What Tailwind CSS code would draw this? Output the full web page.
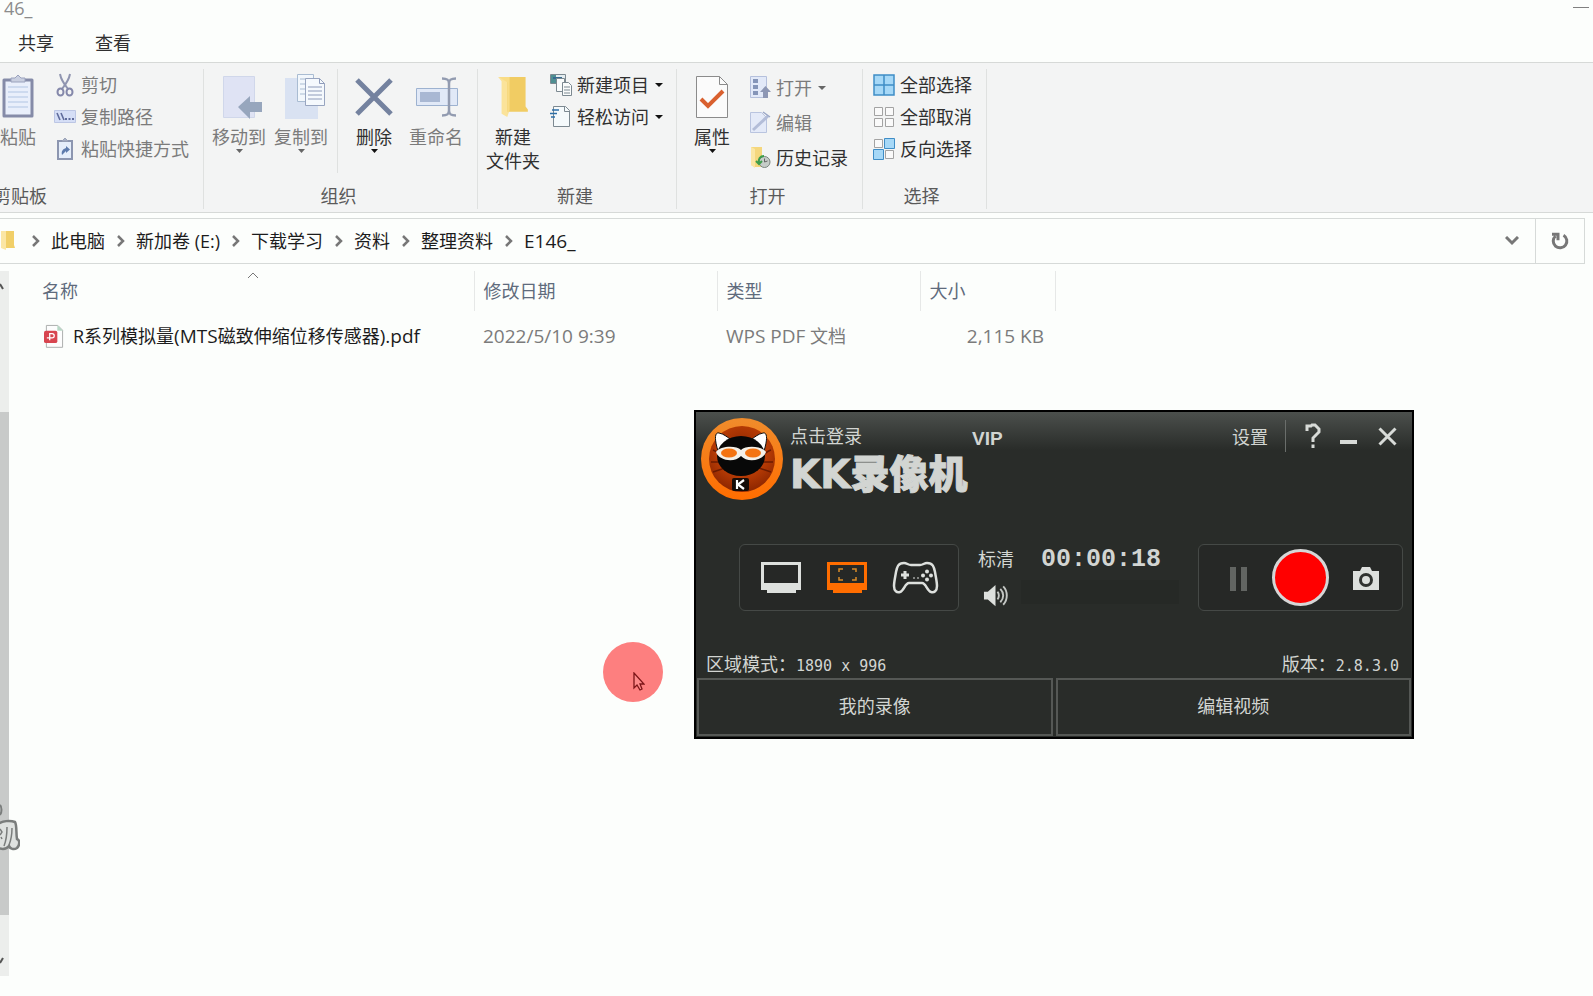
<!DOCTYPE html>
<html lang="zh-CN">
<head>
    <meta charset="UTF-8">
    <meta name="viewport" content="width=device-width, initial-scale=1">
    <title>E146_</title>
    <script src="https://cdn.jsdelivr.net/npm/@tailwindcss/browser@4"></script>
</head>
<body class="relative flex h-screen flex-col overflow-hidden bg-[#fcfefc] font-['Open_Sans','Noto_Sans_CJK_SC',sans-serif] text-[18px] leading-6 text-[#303030]">

    <!-- title bar -->
    <header class="flex h-6 items-start justify-between pl-1 text-[#8c8c8c]">
        <span class="-mt-1">46_</span>
        <button aria-label="最小化" class="mt-[7px] mr-1 h-px w-4 bg-[#808080]"></button>
    </header>

    <nav class="flex h-[38px] items-center gap-[41px] pl-[18px]">
        <button>共享</button>
        <button>查看</button>
    </nav>

    <!-- ribbon -->
    <section class="flex h-[151px] shrink-0 border-y border-[#d6d9d7] bg-[#f3f4f4] pt-1.5 pb-[3px] whitespace-nowrap">

        <div class="flex w-[204px] flex-col border-r border-[#dfe1e0] text-[#7b7b7b]">
            <div class="flex h-[115px] items-start">
                <button class="flex w-9 flex-col items-center">
                    <span class="flex h-14 items-center">
                        <svg class="w-8" viewBox="0 0 32 46">
                            <path d="M2 6h28v36H2z" fill="#e9effb" stroke="#858ba8" stroke-width="3" stroke-linejoin="round"/>
                            <path d="M9 8V4h4l3-3 3 3h4v4z" fill="#c9cfe0" stroke="#9aa2bd"/>
                            <path d="M6 13h20M6 18h20M6 23h20M6 28h20M6 33h20" stroke="#c3d3ec" stroke-width="1.5"/>
                        </svg>
                    </span>
                    粘贴
                </button>
                <div class="ml-[18px]">
                    <button class="flex h-8 items-center gap-[5px]">
                        <svg class="w-[22px]" viewBox="0 0 22 24" fill="none" stroke="#9095b0" stroke-width="2">
                            <path d="M6 1c1 6 4 10 8 15M16 1c-1 6-4 10-8 15"/>
                            <ellipse cx="6.500" cy="19" rx="3" ry="3.500" stroke="#8488aa"/>
                            <ellipse cx="15.500" cy="19" rx="3" ry="3.500" stroke="#8488aa"/>
                        </svg>
                        剪切
                    </button>
                    <button class="flex h-8 items-center gap-[5px]">
                        <svg class="w-[22px]" viewBox="0 0 22 14">
                            <path d="M.5.5h21v12H.5z" fill="#d5def6" stroke="#bcc6e4"/>
                            <path d="M3 3l3 7M7 3l3 7" stroke="#5f6b9b" stroke-width="1.600"/>
                            <path d="M11 9h2M14.500 9h2M18 9h2" stroke="#5f6b9b" stroke-width="2"/>
                        </svg>
                        复制路径
                    </button>
                    <button class="flex h-8 items-center gap-[5px]">
                        <svg class="w-[22px]" viewBox="0 0 22 24" fill="none">
                            <path d="M4 4h14v18H4z" fill="#e5eefb" stroke="#8c96b0" stroke-width="2"/>
                            <path d="M8 4l3-3 3 3z" fill="#aab2c6" stroke="#9aa3b8"/>
                            <path d="M8 18c-1-4 1-6 4-7v-2l4 3.500-4 3.500v-2z" fill="#5d7bad"/>
                        </svg>
                        粘贴快捷方式
                    </button>
                </div>
            </div>
            <p class="-ml-[7px] text-[#5a5a5a]">剪贴板</p>
        </div>

        <div class="flex w-[274px] flex-col border-r border-[#dfe1e0] pl-1">
            <div class="flex h-[115px] items-start text-[#7b7b7b]">
                <button class="flex w-[62px] flex-col items-center">
                    <span class="flex h-14 items-center pl-1.5">
                        <svg class="w-[42px]" viewBox="0 0 42 46">
                            <path d="M2.500 2.500h31v41h-31z" fill="#dfe3f4" stroke="#d0d7ea"/>
                            <path d="M17 33l12-11v6h12v10H29v7z" fill="#97a6bd"/>
                        </svg>
                    </span>
                    移动到
                    <svg class="w-[7px]" viewBox="0 0 7 4"><path d="M0 0h7L3.500 4z" fill="#666"/></svg>
                </button>
                <button class="flex w-[62px] flex-col items-center">
                    <span class="flex h-14 items-center pl-2">
                        <svg class="w-[42px]" viewBox="0 0 42 48">
                            <path d="M1 5h33v41H1z" fill="#d9e2f2"/>
                            <path d="M13.500 1.500h16v27h-16z" fill="#f2f7fc" stroke="#a9bcd2"/>
                            <path d="M16 6h11M16 11h11M16 16h11M16 21h11" stroke="#a9bcd2"/>
                            <path d="M21.500 5.500h14l5 5v22h-19z" fill="#f5f9fd" stroke="#98a5c0"/>
                            <path d="M35.500 5.500v5h5M24 14h14M24 18h14M24 22h14M24 26h14" fill="none" stroke="#8e9bba"/>
                        </svg>
                    </span>
                    复制到
                    <svg class="w-[7px]" viewBox="0 0 7 4"><path d="M0 0h7L3.500 4z" fill="#666"/></svg>
                </button>
                <span class="mx-[5px] h-[104px] w-px bg-[#dfe1e0]"></span>
                <button class="flex w-[62px] flex-col items-center text-[#303030]">
                    <span class="flex h-14 items-center">
                        <svg class="w-[38px]" viewBox="0 0 38 38"><path d="M2 2l34 34M36 2L2 36" stroke="#74829f" stroke-width="5"/></svg>
                    </span>
                    删除
                    <svg class="w-[7px]" viewBox="0 0 7 4"><path d="M0 0h7L3.500 4z" fill="#111"/></svg>
                </button>
                <button class="flex w-[62px] flex-col items-center">
                    <span class="flex h-14 items-center pl-0.5">
                        <svg class="w-[44px]" viewBox="0 0 44 40" fill="none">
                            <path d="M1.500 11.500h41v17h-41z" fill="#e1e9f7" stroke="#9db2d0"/>
                            <path d="M5 15h20v10H5z" fill="#a9b8d3"/>
                            <path d="M27 1.500c5 0 7 1 7 5v27c0 4-2 5-7 5M41 1.500c-5 0-7 1-7 5v27c0 4 2 5 7 5" stroke="#929bb0" stroke-width="2.500"/>
                        </svg>
                    </span>
                    重命名
                </button>
            </div>
            <p class="-ml-2 text-center text-[#5a5a5a]">组织</p>
        </div>

        <div class="flex w-[199px] flex-col border-r border-[#dfe1e0] pl-1">
            <div class="flex h-[115px] items-start">
                <button class="flex w-[62px] flex-col items-center">
                    <span class="flex h-14 items-center">
                        <svg class="w-8" viewBox="0 0 28 40" preserveAspectRatio="none" height="42">
                            <path d="M8 1h17v28l2 3v2H8z" fill="#f1cc63"/>
                            <path d="M1 1l8 4v34l-5-3V5z" fill="#fbe39a"/>
                            <path d="M1 1h10v31l-2 7V6z" fill="#f9dc85"/>
                        </svg>
                    </span>
                    新建<br>文件夹
                </button>
                <div class="ml-1.5">
                    <button class="flex h-8 items-center gap-[5px]">
                        <svg class="w-[22px]" viewBox="0 0 22 22" fill="none" stroke="#7c8991">
                            <path d="M.5.5h15v9H.5z" fill="#e4edf0"/>
                            <path d="M1 1h5v8H1z" fill="#4f8f92" stroke="none"/><path d="M3 4h9" stroke="#376a91" stroke-width="2"/>
                            <path d="M6.500 4.500h8v13h-8z" fill="#fafcfc"/>
                            <path d="M12.500 8.500h6l3 3v10h-9z" fill="#fafcfc"/>
                            <path d="M14 13h6M14 16h6M14 19h6"/>
                        </svg>
                        新建项目
                        <svg class="ml-px w-2" viewBox="0 0 8 4"><path d="M0 0h8L4 4z" fill="#111"/></svg>
                    </button>
                    <button class="flex h-8 items-center gap-[5px]">
                        <svg class="w-[22px]" viewBox="0 0 22 24" fill="none">
                            <path d="M3.500 1.500h12l4 4v16h-16z" fill="#f5fafc" stroke="#7c8991"/>
                            <path d="M14.500 1.500v5h5" stroke="#7c8991"/>
                            <path d="M2 5h7M0 8.500h7M1 12h4" stroke="#2c6fa8" stroke-width="1.500"/>
                        </svg>
                        轻松访问
                        <svg class="ml-px w-2" viewBox="0 0 8 4"><path d="M0 0h8L4 4z" fill="#111"/></svg>
                    </button>
                </div>
            </div>
            <p class="-ml-2 text-center text-[#5a5a5a]">新建</p>
        </div>

        <div class="flex w-[186px] flex-col border-r border-[#dfe1e0] pl-1">
            <div class="flex h-[115px] items-start">
                <button class="flex w-[62px] flex-col items-center">
                    <span class="flex h-14 items-center">
                        <svg class="w-[34px]" viewBox="0 0 34 44" fill="none">
                            <path d="M1.500 1.500h23l8 8v33h-31z" fill="#fbfbfb" stroke="#8b8b8b"/>
                            <path d="M24.500 1.500v8h8" stroke="#8b8b8b"/>
                            <path d="M6 24l7 7 15-15" stroke="#d9602f" stroke-width="4"/>
                        </svg>
                    </span>
                    属性
                    <svg class="w-[7px]" viewBox="0 0 7 4"><path d="M0 0h7L3.500 4z" fill="#111"/></svg>
                </button>
                <div class="ml-[7px] pt-px">
                    <button class="flex h-[35px] items-center gap-[5px] text-[#7b7b7b]">
                        <svg class="w-[21px]" viewBox="0 0 21 23">
                            <path d="M.5.500h16v21H.5z" fill="#e2e9f8" stroke="#b5c0dc"/>
                            <path d="M3 3h5v4H3zM3 9h5v4H3zM3 15h5v4H3z" fill="#8595b8"/>
                            <path d="M10 16l5.500-6 5.500 6h-3v6h-5v-6z" fill="#8d97b4"/>
                        </svg>
                        打开
                        <svg class="ml-px w-2" viewBox="0 0 8 4"><path d="M0 0h8L4 4z" fill="#666"/></svg>
                    </button>
                    <button class="flex h-[35px] items-center gap-[5px] text-[#7b7b7b]">
                        <svg class="w-[21px]" viewBox="0 0 21 23" fill="none">
                            <path d="M.5 1.500h11l5 5v15H.5z" fill="#e4eaf8" stroke="#b9c4df"/>
                            <path d="M3 19L18 5" stroke="#b3bdd8" stroke-width="3"/>
                            <path d="M13 1l7 5" stroke="#9aa6c6" stroke-width="1.500"/>
                        </svg>
                        编辑
                    </button>
                    <button class="flex h-[35px] items-center gap-[5px]">
                        <svg class="w-[21px]" viewBox="0 0 21 23" fill="none">
                            <path d="M1 1h11v20H5l-4-2z" fill="#f5d77d"/><path d="M1 1l4 2v19l-4-3z" fill="#fbe6a4"/>
                            <circle cx="14.500" cy="16" r="5.500" fill="#c5ccc8" stroke="#7b8580"/>
                            <path d="M14.500 12.500V16l3-1" stroke="#666"/>
                            <path d="M14 10c-4 0-6 3-5 7M6 15l3 3 3-3" stroke="#3d9d4b" stroke-width="2"/>
                        </svg>
                        历史记录
                    </button>
                </div>
            </div>
            <p class="-ml-2 text-center text-[#5a5a5a]">打开</p>
        </div>

        <div class="flex w-[124px] flex-col border-r border-[#dfe1e0]">
            <div class="h-[115px] pl-2.5">
                <button class="flex h-8 items-center gap-[5px]">
                    <svg class="w-[22px]" viewBox="0 0 22 22"><path d="M1 1h20v20H1zM11 1v20M1 11h20" fill="#a6d8f7" stroke="#3f8dc6" stroke-width="1.500"/></svg>
                    全部选择
                </button>
                <button class="flex h-8 items-center gap-[5px]">
                    <svg class="w-[22px]" viewBox="0 0 22 22"><path d="M1.500 1.500h8v8h-8zM12.500 1.500h8v8h-8zM1.500 12.500h8v8h-8zM12.500 12.500h8v8h-8z" fill="#fafafa" stroke="#a3a3a3"/></svg>
                    全部取消
                </button>
                <button class="flex h-8 items-center gap-[5px]">
                    <svg class="w-[22px]" viewBox="0 0 22 22">
                        <path d="M1.500 1.500h8v8h-8zM12.500 12.500h8v8h-8z" fill="#fafafa" stroke="#a3a3a3"/>
                        <path d="M11.500.5h10v10h-10zM.5 11.500h10v10H.5z" fill="#a6d8f7" stroke="#3f8dc6"/>
                    </svg>
                    反向选择
                </button>
            </div>
            <p class="-ml-1.5 text-center text-[#5a5a5a]">选择</p>
        </div>
    </section>

    <!-- address bar -->
    <nav class="mt-[5px] mr-2 flex h-[46px] shrink-0 items-stretch border border-l-0 border-[#d6dad8] whitespace-nowrap text-[#1c1c1c]">
        <div class="flex grow items-center" id="crumbs">
            <svg class="mr-1 w-4" viewBox="0 0 16 22"><path d="M4 1h10v14l1 3H4z" fill="#f1cf68"/><path d="M1 1h5v19l-5-2z" fill="#fbe6a4"/></svg>
            <svg class="w-[31px]" viewBox="0 0 31 12"><path d="M13 1l5 5-5 5" fill="none" stroke="#777" stroke-width="2.500"/></svg>
            <a href="#">此电脑</a>
            <svg class="w-[31px]" viewBox="0 0 31 12"><path d="M13 1l5 5-5 5" fill="none" stroke="#777" stroke-width="2.500"/></svg>
            <a href="#">新加卷 (E:)</a>
            <svg class="w-[31px]" viewBox="0 0 31 12"><path d="M13 1l5 5-5 5" fill="none" stroke="#777" stroke-width="2.500"/></svg>
            <a href="#">下载学习</a>
            <svg class="w-[31px]" viewBox="0 0 31 12"><path d="M13 1l5 5-5 5" fill="none" stroke="#777" stroke-width="2.500"/></svg>
            <a href="#">资料</a>
            <svg class="w-[31px]" viewBox="0 0 31 12"><path d="M13 1l5 5-5 5" fill="none" stroke="#777" stroke-width="2.500"/></svg>
            <a href="#">整理资料</a>
            <svg class="w-[31px]" viewBox="0 0 31 12"><path d="M13 1l5 5-5 5" fill="none" stroke="#777" stroke-width="2.500"/></svg>
            <a href="#" class="text-[19px]">E146_</a>
        </div>
        <button aria-label="历史" class="px-4">
            <svg class="w-3.5" viewBox="0 0 14 10"><path d="M1 1l6 6 6-6" fill="none" stroke="#777" stroke-width="3"/></svg>
        </button>
        <button aria-label="刷新" class="flex w-[49px] items-center justify-center border-l border-[#d6dad8]">
            <svg class="w-[18px]" viewBox="0 0 18 18" fill="none" stroke="#777" stroke-width="3">
                <path d="M12.500 3.200A6.800 6.800 0 1 1 4.500 4M1 2.200h6v6"/>
            </svg>
        </button>
    </nav>

    <main class="flex grow items-start">
        <!-- tree pane scrollbar -->
        <aside class="mt-[7px] flex h-[705px] w-[9px] shrink-0 flex-col items-start bg-[#eceeec]">
            <svg class="mt-3 w-1" viewBox="0 0 4 8"><path d="M0 1l3 5" stroke="#555" stroke-width="2"/></svg>
            <div class="mt-[121px] h-[503px] w-full bg-[#c8cac9]"></div>
            <svg class="mt-auto mb-3 w-1" viewBox="0 0 4 8"><path d="M0 7l3-5" stroke="#555" stroke-width="2"/></svg>
        </aside>

        <table class="mt-[7px] ml-[23px] table-fixed border-collapse text-left whitespace-nowrap text-[#7b7b7b]">
            <thead>
                <tr class="h-10 text-[#5f6b7c]">
                    <th class="relative w-[442px] border-r border-[#e6e8e7] pl-2.5 font-normal">
                        名称
                        <svg class="absolute inset-x-0 top-px mx-auto w-3" viewBox="0 0 12 7"><path d="M1 6l5-5 5 5" fill="none" stroke="#777"/></svg>
                    </th>
                    <th class="w-[243px] border-r border-[#e6e8e7] pl-[9px] font-normal">修改日期</th>
                    <th class="w-[203px] border-r border-[#e6e8e7] pl-[9px] font-normal">类型</th>
                    <th class="w-[135px] border-r border-[#e6e8e7] pl-[9px] font-normal">大小</th>
                </tr>
            </thead>
            <tbody>
                <tr class="h-[50px]">
                    <td class="pl-3">
                        <a href="#" class="flex items-center gap-[9px] text-[#1c1c1c]">
                            <svg class="w-5" viewBox="0 0 21 26" fill="none">
                                <path d="M2.500 1.500h12l5 5v18h-17z" fill="#fdfdfd" stroke="#a9acab"/>
                                <path d="M14 1l6 6h-6z" fill="#b8d8c6"/>
                                <rect y="7" width="14" height="13" rx="2" fill="#d8454f"/>
                                <path d="M6 17v-7h2.500a2 2 0 0 1 0 4.500H3" stroke="#fff" stroke-width="1.300"/>
                            </svg>
                            <span>R系列模拟量<span class="text-[19px]">(MTS</span>磁致伸缩位移传感器<span class="text-[19px]">).pdf</span></span>
                        </a>
                    </td>
                    <td class="pl-[9px] text-[19px]">2022/5/10 9:39</td>
                    <td class="pl-[9px]"><span class="text-[19px]">WPS PDF</span> 文档</td>
                    <td class="pr-[11px] text-right text-[19px]">2,115 KB</td>
                </tr>
            </tbody>
        </table>
    </main>

    <!-- desktop mascot peeking in from the left edge -->
    <svg class="absolute top-[800px] left-0 w-5" viewBox="0 0 20 52" fill="none" stroke="#7a7d7c" stroke-width="2.500">
        <path d="M0 5c2 2 2 7 0 10" stroke-width="2"/>
        <path d="M-2 24c4-3 12-4 17-2 2 3 1 12 2 17 3 1 3 6 0 9-3 2-7 1-8-2-3 4-8 3-11 2" fill="#dfe2e0"/>
        <path d="M7 27c0 8-1 14-3 19M12 28c0 6-1 12-3 17M0 29l2 3-2 3M1 37l1 2" stroke-width="1.500"/>
    </svg>

    <!-- screen recorder -->
    <section class="absolute top-[410px] left-[694px] flex w-[720px] flex-col border-2 border-black bg-[#292c29] font-['Liberation_Sans','Noto_Sans_CJK_SC',sans-serif] whitespace-nowrap text-[#d2d5d2]">
        <div class="flex h-[132px] items-start bg-linear-to-b from-[#4c504d] to-[#292c29] to-[38px] pt-1.5 pl-[5px]">
            <svg class="w-[82px]" viewBox="0 0 82 82">
                <defs>
                    <linearGradient id="ring" x1="0" y1="0" x2="0" y2="1"><stop stop-color="#f08c2c"/><stop offset="1" stop-color="#ff6d00"/></linearGradient>
                    <radialGradient id="core" cx=".5" cy=".35" r=".65"><stop stop-color="#8a2500"/><stop offset=".6" stop-color="#b83c05"/><stop offset="1" stop-color="#8d2600"/></radialGradient>
                </defs>
                <circle cx="41" cy="41" r="41" fill="url(#ring)"/>
                <circle cx="41" cy="41" r="33" fill="url(#core)"/>
                <path d="M12 32c6 2 10 8 12 14M70 32c-6 2-10 8-12 14M10 44h14M72 44H58M12 54l12-4M70 54l-12-4" stroke="#6b1b00" fill="none" stroke-width="1.500"/>
                <path d="M17 33C13 20 14 14 18 15c5 1 8 4 11 6l-5 13zM63 33c4-13 3-19-1-18-5 1-8 4-11 6l5 13z" fill="#fff" stroke="#111"/>
                <ellipse cx="40" cy="38" rx="24" ry="20" fill="#080808"/>
                <path d="M15 34c4-6 20-7 25-2 5-5 21-4 25 2-3 9-19 11-25 4-6 7-22 5-25-4z" fill="#f4f0e8"/>
                <ellipse cx="28" cy="35" rx="8" ry="4.500" fill="#f47412"/><ellipse cx="52" cy="35" rx="8" ry="4.500" fill="#f47412"/>
                <rect x="31" y="60" width="17" height="13" rx="2" fill="#160c08"/>
                <path d="M36 62v9M43 62l-6 4.500 6 4.500" stroke="#fff" stroke-width="2.200" fill="none"/>
            </svg>
            <div class="ml-[7px] pt-[5px]">
                <div class="flex items-center">
                    <button class="w-[182px] pb-1 text-left leading-6">点击登录</button>
                    <strong class="text-[19px] leading-8">VIP</strong>
                </div>
                <h1 class="font-['DejaVu_Sans','Noto_Sans_CJK_SC',sans-serif] text-[39px] leading-10 font-black [-webkit-text-stroke:1px_#d2d5d2]">KK录像机</h1>
            </div>
            <div class="mr-[15px] ml-auto flex h-9 items-center gap-[17px]">
                <button class="pt-1">设置</button>
                <span class="h-8 w-px bg-[#6a6e6b]"></span>
                <button aria-label="帮助"><svg class="w-5" viewBox="0 0 20 26" fill="none" stroke="#d8dbd8" stroke-width="3"><path d="M4 8V3h4l1-1h3l4 4v3l-6 6v4M10 21.500v3.500"/></svg></button>
                <button aria-label="最小化" class="mt-3 h-1 w-[17px] bg-[#d8dbd8]"></button>
                <button aria-label="关闭" class="ml-1"><svg class="w-[19px]" viewBox="0 0 19 19"><path d="M1.500 1.500l16 16M17.500 1.500l-16 16" stroke="#d8dbd8" stroke-width="3"/></svg></button>
            </div>
        </div>

        <div class="flex h-[67px] items-stretch pr-[9px] pl-[43px]">
            <div class="flex w-[220px] items-center justify-between rounded-md border border-[#454946] bg-[#262826] pr-[19px] pl-[21px]">
                <button aria-label="全屏模式">
                    <svg class="w-10" viewBox="0 0 40 32"><path d="M0 0h40v28h-5v3H6v-3H0zM3 3v18h34v-18z" fill="#dde0dd" fill-rule="evenodd"/></svg>
                </button>
                <button aria-label="区域模式">
                    <svg class="w-10" viewBox="0 0 40 32">
                        <path d="M0 0h40v28h-5v3H6v-3H0zM3 3v18h34v-18z" fill="#ff6d00" fill-rule="evenodd"/>
                        <path d="M12 10V7h4M25 7h4v3M29 15v3h-4M16 18h-4v-3" fill="none" stroke="#d98a28" stroke-width="1.500"/>
                    </svg>
                </button>
                <button aria-label="游戏模式">
                    <svg class="w-[47px]" viewBox="0 0 47 34" fill="none" stroke="#dde0dd" stroke-width="2.500">
                        <path d="M12 2c3 0 4 2 7 2h9c3 0 4-2 7-2 6 0 7 4 8 9 1 6 2 10 2 14 0 5-3 7-6 6-4-1-5-9-9-9H17c-4 0-5 8-9 9-3 1-6-1-6-6 0-4 1-8 2-14 1-5 2-9 8-9z"/>
                        <path d="M13 10v8M9 14h8" stroke-width="3"/>
                        <path d="M21 17h2M25 17h2" stroke-width="1"/>
                        <g fill="#dde0dd" stroke="none"><circle cx="35" cy="10.500" r="2"/><circle cx="35" cy="18.500" r="2"/><circle cx="31" cy="14.500" r="2"/><circle cx="39" cy="14.500" r="2"/></g>
                    </svg>
                </button>
            </div>
            <div class="ml-[19px] grow">
                <div class="flex h-8 items-center gap-[27px]">
                    <span>标清</span>
                    <time class="font-['Liberation_Mono',monospace] text-[25px] font-bold">00:00:18</time>
                </div>
                <div class="flex h-8 items-center gap-[13px] pl-[5px]">
                    <button aria-label="音量" class="pt-2">
                        <svg class="w-[25px]" viewBox="0 0 26 22" fill="none" stroke="#c4c7c4" stroke-width="2">
                            <path d="M1 7h4l8-7v22l-8-7H1z" fill="#dde0dd" stroke="none"/>
                            <path d="M15 7c2 2 2 6 0 8M18 4c4 4 4 10 0 14M21 1.500c5 5 5 14 0 19"/>
                        </svg>
                    </button>
                    <span class="h-6 w-[158px] bg-[#262926]"></span>
                </div>
            </div>
            <div class="flex w-[205px] items-center justify-between rounded-md border border-[#454946] bg-[#262826] pr-[23px] pl-[31px]">
                <button aria-label="暂停" class="pt-0.5"><svg class="w-[17px]" viewBox="0 0 17 24"><path d="M0 0h6v24H0zM11 0h6v24h-6z" fill="#626562"/></svg></button>
                <button aria-label="停止录制" class="size-[57px] rounded-full border-[3px] border-[#d6d6d6] bg-[#ff0000]"></button>
                <button aria-label="截图" class="pt-0.5">
                    <svg class="w-[26px]" viewBox="0 0 26 24">
                        <path d="M0 4h7l2-4h8l2 4h7v19H0z" fill="#dde0dd"/>
                        <circle cx="13" cy="13" r="5.500" fill="#dde0dd" stroke="#303330" stroke-width="3"/>
                    </svg>
                </button>
            </div>
        </div>

        <div class="mt-[42px] flex justify-between pr-[13px] pl-2.5 leading-6">
            <p>区域模式：<span class="font-['DejaVu_Sans_Mono',monospace] text-[15px]">1890 x 996</span></p>
            <p>版本：<span class="font-['DejaVu_Sans_Mono',monospace] text-[15px]">2.8.3.0</span></p>
        </div>

        <div class="grid h-[59px] grid-cols-2 gap-[3px] px-px pb-px">
            <button class="border-2 border-[#555855]">我的录像</button>
            <button class="border-2 border-[#555855]">编辑视频</button>
        </div>
    </section>

    <!-- click highlight + pointer -->
    <div class="absolute top-[642px] left-[603px] size-[60px] rounded-full bg-[#fd7f7f]">
        <svg class="absolute top-[30px] left-[30px] w-3" viewBox="0 0 12 19"><path d="M1 1v15l3-3 3 5 2-1-2-5h4z" fill="#fd8a8a" stroke="#7d1518" stroke-width="1.300"/></svg>
    </div>
</body>
</html>
